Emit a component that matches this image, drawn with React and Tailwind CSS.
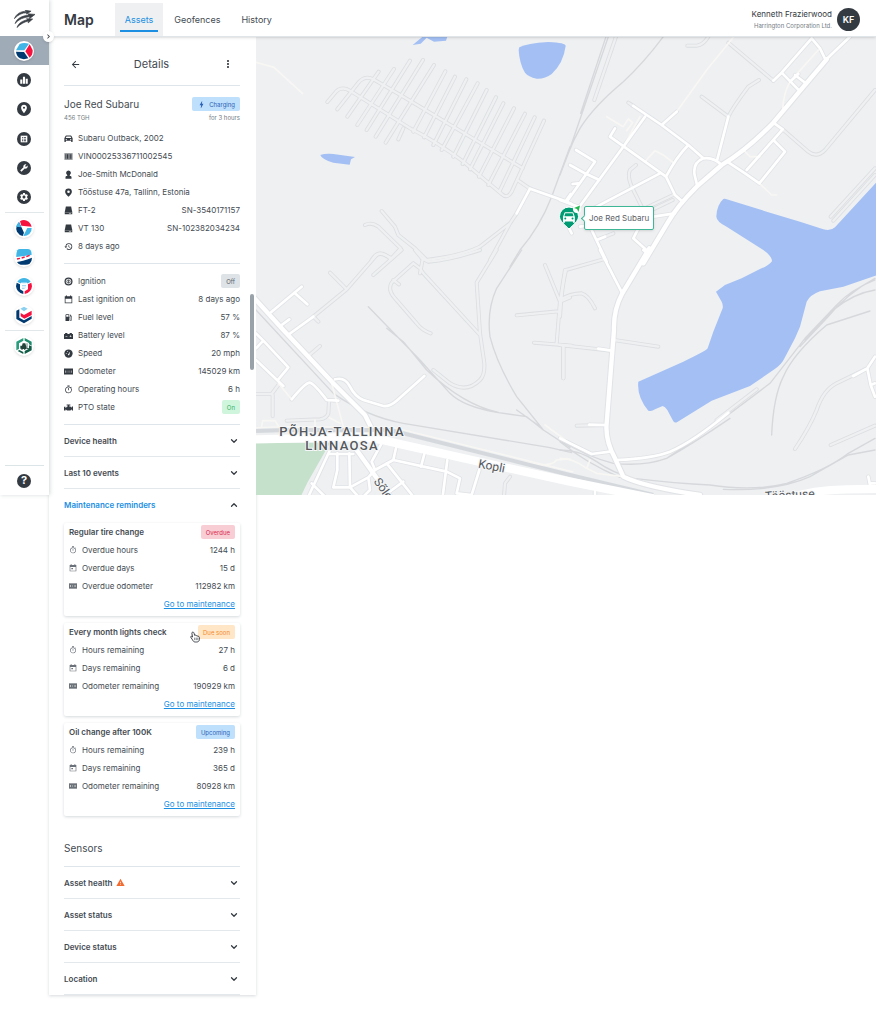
import React, { useState } from 'react';
import {
  MdDirectionsCar, MdPlace, MdHistory, MdLocalGasStation,
  MdOutlineTimer, MdWarning, MdBolt, MdArrowBack, MdMoreVert, MdBuild, MdSettings,
} from 'react-icons/md';
import { FaChevronRight } from 'react-icons/fa';
import { FiChevronDown, FiChevronUp } from 'react-icons/fi';

/* ---------- small icons ---------- */

const Glyph = ({ children, box = 24, className = 'size-[1em]' }) => (
  <svg viewBox={`0 0 ${box} ${box}`} className={className} fill="currentColor" aria-hidden="true">
    {children}
  </svg>
);

const CarIcon = () => (
  <Glyph>
    <path d="M6 4h12c1 0 1.600.5 2 1.400L23 11v9c0 .8-.5 1-1 1h-2c-.7 0-1-.4-1-1v-2H5v2c0 .7-.4 1-1 1H2c-.6 0-1-.3-1-1v-9l3-5.600C4.400 4.500 5 4 6 4zm.7 2.500L4.500 10.500h15L17.300 6.500zM6 13a1.700 1.700 0 1 0 0 3.400A1.700 1.700 0 0 0 6 13zm12 0a1.700 1.700 0 1 0 0 3.400 1.700 1.700 0 0 0 0-3.400z" />
  </Glyph>
);

const PinIcon = () => (
  <Glyph>
    <path d="M12 1a9 9 0 0 1 9 9c0 5-4 9-9 13-5-4-9-8-9-13a9 9 0 0 1 9-9zm0 5.500a3.500 3.500 0 1 0 0 7 3.500 3.500 0 0 0 0-7z" />
  </Glyph>
);

const BarcodeIcon = () => (
  <Glyph>
    <path d="M1 3h22v18H1z" opacity=".55" />
    <path d="M4 6h2v12H4zM8 6h3v12H8zM13 6h1v12h-1zM16 6h2v12h-2zM19 6h1v12h-1z" />
  </Glyph>
);

const DriverIcon = () => (
  <Glyph>
    <path d="M12 1a6.500 6.500 0 0 1 4 11.500l-1 3.500h3l2 2v5H4v-5l2-2h3l-1-3.500A6.500 6.500 0 0 1 12 1z" />
  </Glyph>
);

const DeviceIcon = () => (
  <Glyph>
    <path d="M5 1h14l3 15v6H2v-6z" />
    <path d="M3 17h18v1H3zM13 19.500h6v1h-6z" fill="#fff" />
  </Glyph>
);

const IgnitionIcon = () => (
  <Glyph>
    <circle cx="12" cy="12" r="9" fill="none" stroke="currentColor" strokeWidth="3.500" />
    <circle cx="12" cy="12" r="4.500" fill="none" stroke="currentColor" strokeWidth="2" />
    <path d="M11 8h2v8h-2z" />
  </Glyph>
);

const CalendarIcon = () => (
  <Glyph>
    <path d="M5 1h3v2h8V1h3v2h3v19H2V3h3zM4 10v10h16V10z" />
  </Glyph>
);

const DueCalendarIcon = () => (
  <Glyph>
    <path d="M5 1h3v2h8V1h3v2h3v19H2V3h3zM4 9v11h16V9z" />
    <path d="M7 12h5v4H7z" />
  </Glyph>
);

const BatteryIcon = () => (
  <Glyph>
    <path d="M3 5h6v3h6V5h6v3h3v13H0V8h3z" />
    <path d="M4 13h5v1.500H4zM15 13h5v1.500h-5zM16.800 11.200h1.500v5h-1.500z" fill="#fff" />
  </Glyph>
);

const SpeedIcon = () => (
  <Glyph>
    <circle cx="12" cy="12" r="11" />
    <path d="M10.500 14.500l6-8-2.500 9.500a2 2 0 0 1-3.500-1.500z" fill="#fff" />
    <path d="M5 11h2v2H5zM8 6h2v2H8z" fill="#fff" />
  </Glyph>
);

const OdometerIcon = () => (
  <Glyph>
    <path d="M0 4h24v16H0z" />
    <path d="M3 9h3v6H3zM10 9h1.500v6H10zM15 9h1.500v6H15zM19 9h2v6h-2z" fill="#fff" opacity=".6" />
  </Glyph>
);

const EngineIcon = () => (
  <Glyph>
    <path d="M7 4h10v2.500h-3V9h3l3 3h1V9h3v11h-3v-3h-1l-3 3H8l-3-3H4v3H0V10h4v3h1l3-4h2V6.500H7z" />
  </Glyph>
);

const Logo = () => (
  <svg
    viewBox="0 0 64 54"
    className="h-[18px] w-[21px]"
    fill="#3a4046" stroke="#3a4046" strokeWidth="2" strokeLinejoin="round"
    aria-hidden="true"
  >
    <path d="M1 26C8 10 20 4 38 3l-4-3 18 3-14 9 1-4C24 8 13 14 1 26z" />
    <path d="M3 41c7-16 19-23 42-26l-3-4 22 2-17 13 1-6C28 22 14 28 3 41z" />
    <path d="M9 53c5-13 15-20 32-24l-3-3 19 1-14 12 1-6C29 37 20 42 9 53z" />
  </svg>
);

/* ---------- side navigation ---------- */

const DarkDisc = ({ children }) => (
  <span className="flex size-[14px] items-center justify-center rounded-full bg-[#343a41] text-white">
    {children}
  </span>
);

const AppDisc = ({ children }) => (
  <span className="flex size-5 items-center justify-center rounded-full bg-white shadow">
    <svg viewBox="0 0 60 60" className="size-5" aria-hidden="true">{children}</svg>
  </span>
);

const mainNav = [
  {
    label: 'Map',
    active: true,
    icon: (
      <AppDisc>
        <path d="M6 28 17 9q12-6 28-1L31 28z" fill="#41b6e6" />
        <path d="m47 10 9 18q1 14-9 22L34 31z" fill="#f5123f" />
        <path d="m6 32 24 1 13 19q-14 5-25 0Q8 46 6 32z" fill="#003a70" />
      </AppDisc>
    ),
  },
  {
    label: 'Reports',
    icon: (
      <DarkDisc>
        <Glyph className="size-[10px]"><path d="M3 11h5v10H3zM9.500 4h5v17h-5zM16 9h5v12h-5z" /></Glyph>
      </DarkDisc>
    ),
  },
  { label: 'Places', icon: <DarkDisc><MdPlace size={10} /></DarkDisc> },
  {
    label: 'Lists',
    icon: (
      <DarkDisc>
        <Glyph className="size-[8px]">
          <path d="M2 2h20v20H2z" />
          <path d="M6 6h3v2.500H6zM11 6h7v2.500h-7zM6 11h3v2.500H6zM11 11h7v2.500h-7zM6 16h3v2.500H6zM11 16h7v2.500h-7z" fill="#343a41" />
        </Glyph>
      </DarkDisc>
    ),
  },
  { label: 'Maintenance', icon: <DarkDisc><MdBuild size={8} className="-scale-x-100" /></DarkDisc> },
  { label: 'Settings', icon: <DarkDisc><MdSettings size={10} /></DarkDisc> },
];

const appNav = [
  {
    label: 'Tracking',
    icon: (
      <AppDisc>
        <path d="M18 10q12-8 26 1 7 6 9 15l-31-3z" fill="#f5123f" />
        <path d="M15 12 8 24q-3 8 1 17 6 10 17 13l4-10z" fill="#003a70" />
        <path d="M15 12q-6 5-9 14l16 2z" fill="#41b6e6" />
        <path d="m53 30-13 0-12 24q10 1 18-6 8-8 7-18z" fill="#41b6e6" />
      </AppDisc>
    ),
  },
  {
    label: 'Roads',
    icon: (
      <AppDisc>
        <path d="M7 30Q6 20 10 10q3-4 8-4h24q6 0 9 5 2 5 2 13z" fill="#41b6e6" />
        <path d="m9 36 9-2m5-1 9-3m5-1 10-4" stroke="#f5123f" strokeWidth="4" />
        <path d="M9 45q14-2 45-13 0 12-7 18-5 3-12 3H20q-8-1-11-8z" fill="#003a70" />
      </AppDisc>
    ),
  },
  {
    label: 'Tasks',
    icon: (
      <AppDisc>
        <path d="M10 17Q18 6 30 6t20 11l-8 5H18z" fill="#41b6e6" />
        <path d="m8 20 10 5v15l10 6v8Q8 50 6 31z" fill="#003a70" />
        <path d="m52 20-10 5v15l-10 6v8q20-4 22-23z" fill="#f5123f" />
        <path d="M21 20h18v22H21z" fill="#fff" />
        <path d="M25 18h10v4H25zM24 27h12v2H24zM24 32h12v2H24zM24 37h8v2h-8z" fill="#8bd0ef" />
      </AppDisc>
    ),
  },
  {
    label: 'Checks',
    icon: (
      <AppDisc>
        <path d="m19 11 11-6 11 6-11 8z" fill="#8bd0ef" />
        <path d="m7 17 9-4v25l14 8 23-13v8L30 55 7 42z" fill="#003a70" />
        <path d="m20 24 10 6 23-13v13L31 41 20 34z" fill="#f5123f" />
      </AppDisc>
    ),
  },
];

const forkliftIcon = (
  <AppDisc>
    <path d="m7 17 21-11v8l-13 8v17l-8 4z" fill="#2a9d7c" />
    <path d="M32 6l21 11v12l-8-4v-4l-13-7z" fill="#1f8b6b" />
    <path d="m53 31v12L32 54v-9l13-7v-10zM11 45l5-3 12 6v6z" fill="#0f5c47" />
    <path d="M19 38v-9h5l2-7h8l3 11v6h-3v2h-4v-2h-4v2h-4v-3zM38 22h2v15h5v2h-7z" fill="#23423a" />
  </AppDisc>
);

const NavLinkItem = ({ label, icon, active }) => (
  <a
    href="#"
    aria-label={label}
    className={`flex items-center justify-center pr-px ${active ? 'bg-[#9fabb7]' : ''}`}
  >
    {icon}
  </a>
);

const Sidebar = () => (
  <nav className="relative z-20 flex h-[495px] w-[49px] shrink-0 flex-col bg-white shadow-[1px_0_4px_rgba(60,80,90,0.22)]">
    <a href="#" aria-label="Home" className="flex h-9 items-center justify-center pr-px pt-px">
      <Logo />
    </a>
    <button
      aria-label="Expand menu"
      className="absolute -right-[5px] top-[31px] flex size-[11px] items-center justify-center rounded-full bg-white text-[#343a41] shadow"
    >
      <FaChevronRight size={5} />
    </button>
    <div className="grid h-[176px] grid-rows-6">
      {mainNav.map((item) => <NavLinkItem key={item.label} {...item} />)}
    </div>
    <hr className="mx-[5px] border-[#e2e7ea]" />
    <div className="grid h-[117px] grid-rows-4">
      {appNav.map((item) => <NavLinkItem key={item.label} {...item} />)}
    </div>
    <hr className="mx-[5px] border-[#e2e7ea]" />
    <div className="grid h-[30px]">
      <NavLinkItem label="Warehouse" icon={forkliftIcon} />
    </div>
    <div className="mt-auto">
      <hr className="mx-[5px] border-[#dbe4e7]" />
      <a href="#" aria-label="Help" className="flex h-[29px] items-center justify-center pr-px">
        <DarkDisc><span className="text-[11px] font-bold leading-none">?</span></DarkDisc>
      </a>
    </div>
  </nav>
);

/* ---------- top bar ---------- */

const tabs = ['Assets', 'Geofences', 'History'];

const TopBar = () => {
  const [tab, setTab] = useState('Assets');

  return (
    <header className="relative z-10 flex h-[37px] items-stretch border-b border-[#e0e5ea] bg-white pl-[15px] pr-4 pt-[3px] shadow-sm">
      <h1 className="mr-[21px] self-center text-[14px] font-semibold leading-4 text-[#343a41]">Map</h1>
      <div className="flex gap-px">
        {tabs.map((name) => (
          <button
            key={name}
            onClick={() => setTab(name)}
            className={`relative px-[10px] text-[9px] ${
              tab === name ? 'bg-[#eef0f2] text-[#1c8fe3]' : 'text-[#444b52]'
            }`}
          >
            {name}
            {tab === name && <span className="absolute inset-x-[5px] bottom-1 h-[2px] bg-[#1c8fe3]" />}
          </button>
        ))}
      </div>
      <div className="ml-auto flex items-center gap-[5px]">
        <div className="text-right">
          <p className="text-[8px] leading-[11px] text-[#343a41]">Kenneth Frazierwood</p>
          <p className="text-[6px] leading-[11px] text-[#747c84]">Harrington Corporation Ltd.</p>
        </div>
        <span className="flex size-[23px] items-center justify-center rounded-full bg-[#343a41] text-[9px] font-semibold text-white">
          KF
        </span>
      </div>
    </header>
  );
};

/* ---------- details panel ---------- */

const assetInfo = [
  { icon: <CarIcon />, label: 'Subaru Outback, 2002' },
  { icon: <BarcodeIcon />, label: 'VIN00025336711002545' },
  { icon: <DriverIcon />, label: 'Joe-Smith McDonald' },
  { icon: <PinIcon />, label: 'Tööstuse 47a, Tallinn, Estonia' },
  { icon: <DeviceIcon />, label: 'FT-2', value: 'SN-3540171157' },
  { icon: <DeviceIcon />, label: 'VT 130', value: 'SN-102382034234' },
  { icon: <MdHistory />, label: '8 days ago' },
];

const assetState = [
  { icon: <IgnitionIcon />, label: 'Ignition', value: <Badge tone="gray">Off</Badge> },
  { icon: <CalendarIcon />, label: 'Last ignition on', value: '8 days ago' },
  { icon: <MdLocalGasStation />, label: 'Fuel level', value: '57 %' },
  { icon: <BatteryIcon />, label: 'Battery level', value: '87 %' },
  { icon: <SpeedIcon />, label: 'Speed', value: '20 mph' },
  { icon: <OdometerIcon />, label: 'Odometer', value: '145029 km' },
  { icon: <MdOutlineTimer />, label: 'Operating hours', value: '6 h' },
  { icon: <EngineIcon />, label: 'PTO state', value: <Badge tone="green">On</Badge> },
];

const reminders = [
  {
    title: 'Regular tire change',
    status: 'Overdue',
    tone: 'red',
    labels: ['Overdue hours', 'Overdue days', 'Overdue odometer'],
    values: ['1244 h', '15 d', '112982 km'],
  },
  {
    title: 'Every month lights check',
    status: 'Due soon',
    tone: 'orange',
    labels: ['Hours remaining', 'Days remaining', 'Odometer remaining'],
    values: ['27 h', '6 d', '190929 km'],
  },
  {
    title: 'Oil change after 100K',
    status: 'Upcoming',
    tone: 'blue',
    labels: ['Hours remaining', 'Days remaining', 'Odometer remaining'],
    values: ['239 h', '365 d', '80928 km'],
  },
];

const reminderIcons = [<MdOutlineTimer />, <DueCalendarIcon />, <OdometerIcon />];

const badgeTones = {
  gray: 'bg-[#dde3e7] text-[#5a6269]',
  green: 'bg-[#d0f5dd] text-[#35b267]',
  red: 'bg-[#f8cdd3] text-[#d92b52]',
  orange: 'bg-[#ffe6c7] text-[#f58a2c]',
  blue: 'bg-[#bfe0fc] text-[#2c62b8]',
};

function Badge({ tone, children }) {
  return (
    <span className={`inline-flex h-[14px] items-center gap-[3px] rounded-[2px] px-[5px] text-[6px] ${badgeTones[tone]}`}>
      {children}
    </span>
  );
}

const Row = ({ icon, label, value, muted }) => (
  <div className="flex h-[18px] items-center text-[8px] text-[#444b52]">
    <dt className="flex items-center gap-[5px]">
      <span className={muted ? 'text-[8px] text-[#6b7279]' : 'text-[9px] text-[#343a41]'}>{icon}</span>
      {label}
    </dt>
    {value && <dd className="ml-auto">{value}</dd>}
  </div>
);

const AccordionHead = ({ title, open, onToggle, warning }) => (
  <button
    onClick={onToggle}
    aria-expanded={open}
    className={`flex h-8 w-full items-center gap-1 text-[8px] font-semibold ${
      open ? 'text-[#1c8fe3]' : 'border-b border-[#e2e8ec] text-[#444b52]'
    }`}
  >
    {title}
    {warning && <MdWarning size={9} className="text-[#f26b31]" />}
    <span className="ml-auto mr-px text-[#343a41]">
      {open ? <FiChevronUp size={10} strokeWidth={3} /> : <FiChevronDown size={10} strokeWidth={3} />}
    </span>
  </button>
);

const HandCursor = () => (
  <svg viewBox="0 0 32 36" className="absolute -left-[8px] top-[6px] h-[12px] w-[10px]" aria-hidden="true">
    <path
      d="M7 3c3-2 5 0 6 3l2 7c2-2 5-1 5 1 3-1 5 0 5 2 3-1 5 1 5 4v6c0 5-4 8-9 8h-4c-5 0-7-3-9-7l-6-9c0-3 4-3 6 0L6 6z"
      fill="#fff" stroke="#343a41" strokeWidth="3" strokeLinejoin="round"
    />
    <path d="M15 20v8m5-8v8m5-8v8" stroke="#343a41" strokeWidth="2" />
  </svg>
);

const ReminderCard = ({ title, status, tone, labels, values }) => (
  <article className="rounded-[2px] bg-white px-[5px] pb-[3px] shadow-[0_1px_3px_rgba(50,70,80,0.2)]">
    <div className="flex h-[18px] items-center justify-between">
      <h3 className="text-[8px] font-semibold text-[#444b52]">{title}</h3>
      <span className="relative flex">
        <Badge tone={tone}>{status}</Badge>
        {tone === 'orange' && <HandCursor />}
      </span>
    </div>
    <dl>
      {labels.map((label, i) => (
        <Row key={label} icon={reminderIcons[i]} label={label} value={values[i]} muted />
      ))}
    </dl>
    <p className="flex h-[18px] items-center justify-end">
      <a href="#" className="text-[8px] text-[#1c8fe3] underline underline-offset-1">Go to maintenance</a>
    </p>
  </article>
);

const sensors = ['Asset health', 'Asset status', 'Device status', 'Location'];

const DetailsPanel = () => {
  const [open, setOpen] = useState({ 'Maintenance reminders': true });
  const head = (title) => (
    <AccordionHead
      key={title}
      title={title}
      open={!!open[title]}
      warning={title === 'Asset health'}
      onToggle={() => setOpen({ ...open, [title]: !open[title] })}
    />
  );

  return (
    <aside className="relative w-[207px] shrink-0 bg-white pl-[15px] pr-4 shadow-[0_1px_3px_rgba(50,70,80,0.2)]">
      {/* Scroll thumb */}
      <span className="absolute right-[2px] top-[257px] h-[76px] w-[4px] rounded-full bg-[#9aa2a9]" />

      <div className="flex h-[49px] items-center justify-between border-b border-[#dfe6eb] px-[6px] pt-[6px] text-[#343a41]">
        <button aria-label="Back"><MdArrowBack size={11} /></button>
        <h2 className="text-[11px] text-[#444b52]">Details</h2>
        <button aria-label="More"><MdMoreVert size={12} /></button>
      </div>

      <section className="border-b border-[#dfe6eb] pb-2 pt-[11px]">
        <div className="flex h-[14px] items-center justify-between">
          <h3 className="text-[10px] text-[#444b52]">Joe Red Subaru</h3>
          <Badge tone="blue"><MdBolt size={9} />Charging</Badge>
        </div>
        <div className="mb-[6px] mt-[1px] flex h-[11px] items-center justify-between text-[6px] text-[#747c84]">
          <span>456 TGH</span>
          <span>for 3 hours</span>
        </div>
        <dl>
          {assetInfo.map((row) => <Row key={row.label} {...row} />)}
        </dl>
      </section>

      <dl className="border-b border-[#dfe6eb] py-2">
        {assetState.map((row) => <Row key={row.label} {...row} />)}
      </dl>

      {head('Device health')}
      {head('Last 10 events')}
      {head('Maintenance reminders')}
      {open['Maintenance reminders'] && (
        <div className="flex flex-col gap-[7px] pt-[2px]">
          {reminders.map((card) => <ReminderCard key={card.title} {...card} />)}
        </div>
      )}

      <h2 className="mt-6 border-b border-[#dfe6eb] pb-[10px] text-[10px] leading-4 text-[#444b52]">Sensors</h2>
      {sensors.map(head)}
    </aside>
  );
};

/* ---------- map ---------- */

// Each tile holds path data in thirds of a pixel, shifted by its own origin.
const tiles = [
  {
    at: 'translate(750 0)',
    minor: `M232 306 258 275Q275 258 300 272L480 385Q560 425 640 485L755 582Q772 598 785 575L882 362
      M262 328 325 248Q345 225 370 238L460 290 560 350 818 505M386 215 292 350M432 207 322 375M480 182 350 390
      M519 180 377 410M552 195 407 428M460 385 445 418M586 214 490 395M615 230 522 412M649 238 550 435M683 250 575 450
      M710 270 610 470M738 292 638 492M760 310 660 508M792 325 687 530M825 341 715 555M854 352 748 575
      M805 542 840 566M800 640 780 670 720 780M780 670 690 740Q640 765 545 778L530 780M395 633 435 680 445 705 495 745 530 780
      M345 675Q365 665 385 680L452 745 420 780M365 780Q380 755 400 762L425 775`,
    white: 'M800 640 840 566 947 604 965 612M947 604 962 582',
    rail: 'M960 440 905 590Q870 680 810 750L780 800',
    trail: 'M18 187 72 202 158 281',
  },
  {
    at: 'translate(1680 0)',
    minor: `M168 110 103 300M382 137 410 137Q430 135 445 110M505 128 640 242M425 290 505 350M597 240 565 260Q520 320 505 350
      M668 388 745 455Q770 475 795 450L945 270M945 505 812 650M945 525 820 662M228 495 210 510Q200 530 220 570L245 620
      M340 585 180 660M338 600 265 635M205 308 220 318M110 720 160 700`,
    white: `M640 242 665 218 755 115 780 145 797 180M870 110 797 180M665 218 718 272M705 225 740 252M690 245 715 222
      M505 350 472 478M640 368 668 388 560 510M505 487 555 520 598 550M640 420 675 455 598 550
      M220 318 305 375 385 435 430 475M305 375 350 335M430 475Q460 470 485 495M430 475Q395 490 405 530L412 558
      M385 435Q350 470 318 530M255 350 190 440 60 618M165 385 150 410 318 530 345 585 368 605
      M300 520 100 625M48 450 105 485 20 605M30 495 75 520 118 540M38 552 55 550M0 600 55 620M95 690 140 785
      M345 640 280 650 60 680M110 720 135 710M250 655 220 715 265 755M20 670 35 700`,
    major: 'M800 178 718 275 640 368Q560 450 485 495L410 560Q350 620 325 665L250 790',
    rail: 'M145 110 25 460 0 525M138 110 62 340M310 110Q250 190 190 245 100 320 60 385 40 420 25 460',
    trail: 'M520 112 440 210 350 335M775 150 690 245Q670 280 668 330M550 450 570 470 600 470M598 550 635 585 650 585M140 350 190 380 205 357 218 368 200 392M240 350 190 440M255 485 285 452 310 465 340 488',
  },
  {
    at: 'translate(750 750)',
    minor: `M290 118 240 68M190 200 290 118 380 15Q395 5 420 25M455 0 370 75M190 200 205 215M175 318 210 288
      M430 90 447 103M490 40 425 98Q412 120 435 145L500 220Q515 240 542 250M490 40 510 55 520 70 690 255
      M495 0 518 28 510 70M515 25 535 35Q600 30 690 0M740 0 680 98 690 250 703 340Q705 375 690 390 650 430 600 400L550 360
      M885 45 930 155 920 280M945 60 930 155M930 155 960 142M800 196 925 184M852 278 965 287M940 290 940 385
      M18 432 65 432 85 405M68 435 68 498M237 455 235 490Q230 505 210 508L110 512M780 680 765 700 762 740`,
    white: `M63 187 155 110M133 128 172 163M118 252 190 200M95 225 118 208
      M255 388Q285 380 300 410 315 440 340 450L400 468Q420 470 440 452L523 378
      M40 272 115 352 85 388M18 250 40 272 18 295M18 330 100 408M125 448Q165 400 178 398 190 398 230 450L265 452
      M240 600 175 740M262 610 262 660 250 712M298 610 300 712M235 612 310 612M185 700 225 740M250 712 300 712 355 682 360 720 340 740M355 682 375 660M300 712 325 740
      M375 660 430 630 440 585M395 580 365 635 375 660M430 630 590 665 630 685 620 730 665 735M410 640 490 740M525 605 513 650M592 630 578 740
      M688 660 665 735M405 735 460 695`,
    major: 'M0 130 100 240 250 400 345 495 372 550M320 600 420 740',
    rail: `M18 180 250 430Q350 500 460 520L900 593 965 608M355 170 510 330 600 430Q640 470 740 487L830 500 880 540 960 592
      M410 235 460 275 530 360Q640 465 745 487M815 0 740 115Q710 180 720 260 740 340 800 440L880 540M800 480 870 530`,
    trail: 'M85 400 125 448M245 400 280 530M35 530 38 512 75 512 85 528M195 510 195 535M238 503 270 520M760 625 870 645Q910 645 920 630L960 627M885 525 960 580',
  },
  {
    at: 'translate(1680 750)',
    minor: `M18 60 130 28M18 60Q5 110 0 200M0 150Q30 130 65 130 85 135 105 175M162 270 295 290M0 285 155 302M10 288 10 385
      M50 527 138 525M470 510 590 418M705 597Q750 530 770 480 790 420 830 400L922 355M812 585 945 527`,
    white: `M120 0 187 130M115 296 155 302M88 524 138 525M170 630Q280 625 330 605 400 575 505 488M0 565 95 612 150 605
      M880 378 922 355 945 320M922 355 932 405 945 440M932 405 945 400M925 680 932 715M932 700 945 700M105 722 105 740M250 0 262 10`,
    major: 'M268-5 187 130Q160 180 162 240L140 520Q135 570 165 625L190 680Q250 710 420 735',
    rail: `M0 570Q80 620 160 640 250 650 320 625 400 580 510 505M0 600Q60 600 110 635 160 670 220 685 350 700 450 705 580 725 680 700 800 660 865 610L945 565
      M0 575Q80 640 180 682M320 625Q420 560 630 400L735 265 830 165Q870 120 945 90M735 270 820 180Q880 130 945 120M720 290 800 205Q860 130 945 85
      M930 183 800 225Q700 310 670 380 640 440 635 555M490 718Q650 725 750 680L865 615 945 600`,
    trail: 'M0 625Q40 625 80 655L110 670 190 680M80 655 90 630',
  },
];

const Layer = ({ kind, stroke, width }) => (
  <g fill="none" stroke={stroke} strokeWidth={width} strokeLinecap="round" strokeLinejoin="round">
    {tiles.map((tile) => tile[kind] && <path key={tile.at} transform={tile.at} d={tile[kind]} />)}
  </g>
);

const MapDrawing = () => (
  <svg viewBox="256 37 620 458" preserveAspectRatio="xMinYMin slice" className="block size-full" aria-hidden="true">
    <g transform="scale(.33333)">
      {/* Park and water */}
      <path d="M768 1328h222l-68 120-20 42H768z" fill="#c5e0cb" />
      <g fill="#a3bff4">
        <path d="M1238 135 1268 110h74l-4 12-36 3-22-12-18 18z" />
        <path d="M1558 142Q1580 130 1645 126q53 2 52 12-7 52-42 84-20 15-45 14-25-6-35-18-17-28-19-68z" />
        <path d="M961 465q14-5 39-3l65 9-12 7-4 16-49-6q-35-10-39-23z" />
        <path
          transform="translate(1680 0)"
          d="M490 597Q470 615 469 650 470 665 500 680L610 750Q636 768 636 784 625 798 600 807L545 835 495 855 468 875 485 905Q490 915 488 925L460 995 443 1045Q440 1052 370 1085L235 1145Q230 1190 265 1232 275 1235 285 1228L308 1218Q315 1220 322 1230L340 1264Q345 1270 352 1266L455 1202 570 1158 640 1110Q665 1095 675 1072L705 1015 720 980 740 905Q750 885 780 874L850 860 960 822V535L825 682Q812 694 790 688L720 665 620 635 500 598Q495 595 490 597z"
        />
      </g>

      <Layer kind="rail" stroke="#d6d8db" width={4} />
      <Layer kind="minor" stroke="#dcdee1" width={12} />
      <Layer kind="white" stroke="#e1e3e6" width={13} />
      <Layer kind="major" stroke="#e1e3e6" width={19} />
      <Layer kind="minor" stroke="#eef0f1" width={7} />
      <Layer kind="trail" stroke="#f8f7f4" width={5} />
      <Layer kind="white" stroke="#fff" width={8} />
      <Layer kind="major" stroke="#fff" width={13} />

      {/* Kopli main road with its tram line */}
      <g fill="none">
        <path d="M768 1293 860 1290 1170 1290 1710 1425 1960 1485" stroke="#d5d9dd" strokeWidth="12" />
        <path d="M768 1283 860 1280 1180 1282 1720 1416" stroke="#f8f7f4" strokeWidth="4" />
        <path d="M768 1318 1070 1311Q1120 1312 1190 1330L1710 1445 1960 1495M2330 1505q100-36 210-37l110-2" stroke="#fff" strokeWidth="25" />
      </g>
    </g>

    <g
      className="font-['Roboto',sans-serif] text-[12px]"
      fill="#54585c" stroke="#f5f6f7" strokeWidth="2" paintOrder="stroke" textAnchor="middle"
    >
      <g className="text-[13px] font-medium tracking-widest">
        <text x="342" y="436">PÕHJA-TALLINNA</text>
        <text x="342" y="450">LINNAOSA</text>
      </g>
      <text transform="translate(491 470) rotate(11)">Kopli</text>
      <text transform="translate(380 491) rotate(55)">Sõle</text>
      <text transform="translate(790 499) rotate(-3)">Tööstuse</text>
    </g>
  </svg>
);

const AssetMarker = () => (
  <div className="absolute left-[301px] top-[167px] flex items-start">
    <svg viewBox="0 0 24 28" className="h-[28px] w-6" aria-hidden="true">
      <path d="M12 3a9.500 9.500 0 0 1 9.500 9.500C21.500 17 16 21 12 25 8 21 2.500 17 2.500 12.500A9.500 9.500 0 0 1 12 3z" fill="#009b72" stroke="#fff" strokeWidth="1" />
      <g transform="translate(4 5) scale(.66)" fill="#fff">
        <path d="M18.900 6c-.2-.6-.8-1-1.400-1h-11c-.7 0-1.200.4-1.400 1L3 12v8c0 .6.500 1 1 1h1c.6 0 1-.4 1-1v-1h12v1c0 .6.500 1 1 1h1c.6 0 1-.4 1-1v-8zM6.500 16a1.500 1.500 0 1 1 0-3 1.500 1.500 0 0 1 0 3zm11 0a1.500 1.500 0 1 1 0-3 1.500 1.500 0 0 1 0 3zM5 11l1.500-4.500h11L19 11z" />
      </g>
      <circle cx="20" cy="5" r="4" fill="#fff" />
      <path d="m17 4 6-2.500-1.500 6.500-1.500-3z" fill="#1fb84f" />
    </svg>
    <span className="relative ml-[3px] mt-[2px] flex h-6 items-center rounded-[2px] border border-[#3db795] bg-white px-1 text-[8px] text-[#5b6167] shadow-sm">
      <i className="absolute -left-[3px] size-[5px] rotate-45 border-b border-l border-[#3db795] bg-white" />
      Joe Red Subaru
    </span>
  </div>
);

const App = () => (
  <div className="flex min-h-screen items-start bg-white font-['Inter',sans-serif]">
    <Sidebar />
    <div className="min-w-0 flex-1">
      <TopBar />
      <main className="flex items-start">
        <DetailsPanel />
        <div className="relative h-[458px] min-w-0 flex-1 overflow-hidden bg-[#eef0f2]">
          <MapDrawing />
          <AssetMarker />
        </div>
      </main>
    </div>
  </div>
);

export default App;
